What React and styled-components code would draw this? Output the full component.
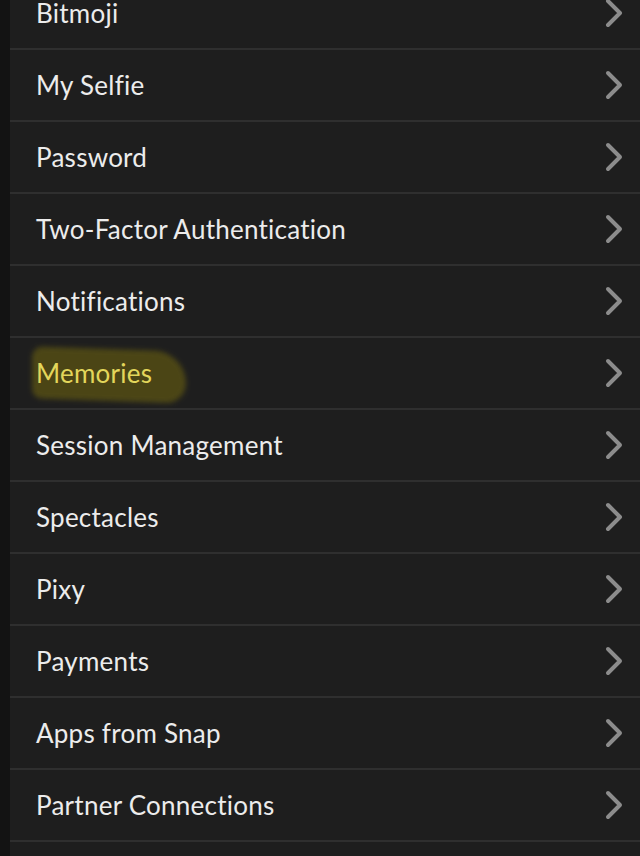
import React from "react";
import styled, { createGlobalStyle } from "styled-components";

const items = [
  "Bitmoji",
  "My Selfie",
  "Password",
  "Two-Factor Authentication",
  "Notifications",
  "Memories",
  "Session Management",
  "Spectacles",
  "Pixy",
  "Payments",
  "Apps from Snap",
  "Partner Connections",
];

const Global = createGlobalStyle`
  html, body {
    margin: 0;
    background: #1e1e1e;
    overflow: hidden;
  }
`;

const Page = styled.div`
  display: flex;
  width: 640px;
  height: 856px;
  overflow: hidden;
  background: #1e1e1e;
`;

const Edge = styled.div`
  width: 10px;
  flex-shrink: 0;
  background: #131313;
`;

const List = styled.ul`
  flex: 1;
  margin: -22px 0 0;
  padding: 0;
  list-style: none;
`;

const Row = styled.li`
  position: relative;
  display: flex;
  align-items: center;
  justify-content: space-between;
  height: 70px;
  padding: 0 16px 0 26px;
  border-bottom: 2px solid #2f2f2f;
`;

const Label = styled.span`
  position: relative;
  font-family: Lato, "Open Sans", sans-serif;
  font-size: 26px;
  letter-spacing: 0.25px;
  color: ${(p) => (p.$marked ? "#e3d65b" : "#ececec")};
`;

const Marker = styled.span`
  position: absolute;
  left: -4px;
  right: -34px;
  top: -8px;
  bottom: -12px;
  background: rgba(130, 118, 12, 0.45);
  border-radius: 12px 34px 22px 10px;
  filter: blur(2.5px);
  transform: skewY(2deg);
`;

const LabelText = styled.span`
  position: relative;
`;

const Chevron = () => (
  <svg width="20" height="30" viewBox="0 0 20 30">
    <path
      d="M4 3 L16 15 L4 27"
      fill="none"
      stroke="#8c8c8c"
      strokeWidth="4"
      strokeLinecap="round"
      strokeLinejoin="round"
    />
  </svg>
);

export default function App() {
  return (
    <Page>
      <Global />
      <Edge />
      <List>
        {items.map((item) => {
          const marked = item === "Memories";
          return (
            <Row key={item}>
              <Label $marked={marked}>
                {marked && <Marker />}
                <LabelText>{item}</LabelText>
              </Label>
              <Chevron />
            </Row>
          );
        })}
      </List>
    </Page>
  );
}
